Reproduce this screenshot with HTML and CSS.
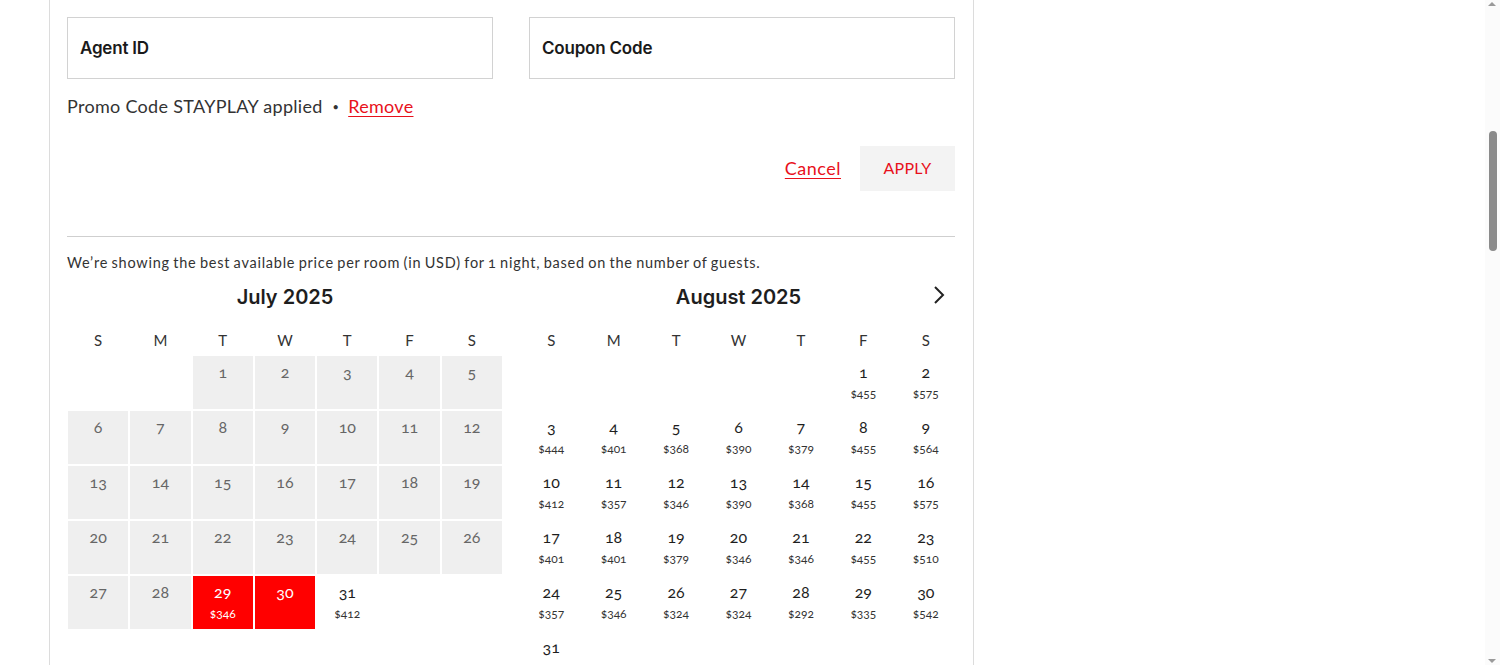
FILE: index.html
```html
<!DOCTYPE html>
<html lang="en">
<head>
<meta charset="utf-8">
<title>Booking</title>
<link rel="stylesheet" href="styles.css">
</head>
<body>
<div class="panel">
  <div class="inputs">
    <div class="field"><span class="label">Agent ID</span></div>
    <div class="field"><span class="label">Coupon Code</span></div>
  </div>
  <p class="promo">Promo Code STAYPLAY applied <span class="dot">•</span> <a class="link" href="#">Remove</a></p>
  <div class="actions">
    <a class="link cancel" href="#">Cancel</a>
    <button class="apply">APPLY</button>
  </div>
  <hr class="divider">
  <p class="note">We’re showing the best available price per room (in USD) for 1 night, based on the number of guests.</p>
  <div class="calendars">
    <div class="month">
      <div class="month-head"><span></span><h2 class="month-title">July 2025</h2><span></span></div>
      <div class="grid">
        <div class="dow">S</div><div class="dow">M</div><div class="dow">T</div><div class="dow">W</div><div class="dow">T</div><div class="dow">F</div><div class="dow">S</div>
        <div class="day empty"></div><div class="day empty"></div>
        <div class="day past"><span class="num">1</span></div>
        <div class="day past"><span class="num">2</span></div>
        <div class="day past"><span class="num">3</span></div>
        <div class="day past"><span class="num">4</span></div>
        <div class="day past"><span class="num">5</span></div>
        <div class="day past"><span class="num">6</span></div>
        <div class="day past"><span class="num">7</span></div>
        <div class="day past"><span class="num">8</span></div>
        <div class="day past"><span class="num">9</span></div>
        <div class="day past"><span class="num">10</span></div>
        <div class="day past"><span class="num">11</span></div>
        <div class="day past"><span class="num">12</span></div>
        <div class="day past"><span class="num">13</span></div>
        <div class="day past"><span class="num">14</span></div>
        <div class="day past"><span class="num">15</span></div>
        <div class="day past"><span class="num">16</span></div>
        <div class="day past"><span class="num">17</span></div>
        <div class="day past"><span class="num">18</span></div>
        <div class="day past"><span class="num">19</span></div>
        <div class="day past"><span class="num">20</span></div>
        <div class="day past"><span class="num">21</span></div>
        <div class="day past"><span class="num">22</span></div>
        <div class="day past"><span class="num">23</span></div>
        <div class="day past"><span class="num">24</span></div>
        <div class="day past"><span class="num">25</span></div>
        <div class="day past"><span class="num">26</span></div>
        <div class="day past"><span class="num">27</span></div>
        <div class="day past"><span class="num">28</span></div>
        <div class="day selected"><span class="num">29</span><span class="price">$346</span></div>
        <div class="day selected"><span class="num">30</span></div>
        <div class="day"><span class="num">31</span><span class="price">$412</span></div>
      </div>
    </div>
    <div class="month">
      <div class="month-head"><span></span><h2 class="month-title">August 2025</h2>
        <button class="next" aria-label="Next month"><svg width="14" height="20" viewBox="0 0 14 20"><polyline points="3,2 11,10 3,18" fill="none" stroke="#222" stroke-width="2"/></svg></button>
      </div>
      <div class="grid">
        <div class="dow">S</div><div class="dow">M</div><div class="dow">T</div><div class="dow">W</div><div class="dow">T</div><div class="dow">F</div><div class="dow">S</div>
        <div class="day empty"></div><div class="day empty"></div><div class="day empty"></div><div class="day empty"></div><div class="day empty"></div>
        <div class="day"><span class="num">1</span><span class="price">$455</span></div>
        <div class="day"><span class="num">2</span><span class="price">$575</span></div>
        <div class="day"><span class="num">3</span><span class="price">$444</span></div>
        <div class="day"><span class="num">4</span><span class="price">$401</span></div>
        <div class="day"><span class="num">5</span><span class="price">$368</span></div>
        <div class="day"><span class="num">6</span><span class="price">$390</span></div>
        <div class="day"><span class="num">7</span><span class="price">$379</span></div>
        <div class="day"><span class="num">8</span><span class="price">$455</span></div>
        <div class="day"><span class="num">9</span><span class="price">$564</span></div>
        <div class="day"><span class="num">10</span><span class="price">$412</span></div>
        <div class="day"><span class="num">11</span><span class="price">$357</span></div>
        <div class="day"><span class="num">12</span><span class="price">$346</span></div>
        <div class="day"><span class="num">13</span><span class="price">$390</span></div>
        <div class="day"><span class="num">14</span><span class="price">$368</span></div>
        <div class="day"><span class="num">15</span><span class="price">$455</span></div>
        <div class="day"><span class="num">16</span><span class="price">$575</span></div>
        <div class="day"><span class="num">17</span><span class="price">$401</span></div>
        <div class="day"><span class="num">18</span><span class="price">$401</span></div>
        <div class="day"><span class="num">19</span><span class="price">$379</span></div>
        <div class="day"><span class="num">20</span><span class="price">$346</span></div>
        <div class="day"><span class="num">21</span><span class="price">$346</span></div>
        <div class="day"><span class="num">22</span><span class="price">$455</span></div>
        <div class="day"><span class="num">23</span><span class="price">$510</span></div>
        <div class="day"><span class="num">24</span><span class="price">$357</span></div>
        <div class="day"><span class="num">25</span><span class="price">$346</span></div>
        <div class="day"><span class="num">26</span><span class="price">$324</span></div>
        <div class="day"><span class="num">27</span><span class="price">$324</span></div>
        <div class="day"><span class="num">28</span><span class="price">$292</span></div>
        <div class="day"><span class="num">29</span><span class="price">$335</span></div>
        <div class="day"><span class="num">30</span><span class="price">$542</span></div>
        <div class="day"><span class="num">31</span><span class="price">$401</span></div>
      </div>
    </div>
  </div>
</div>
<div class="scrollbar">
  <span class="arrow up"></span>
  <span class="thumb"></span>
  <span class="arrow down"></span>
</div>
</body>
</html>
```

FILE: styles.css
```css
html, body {
  margin: 0;
  padding: 0;
  height: 665px;
  overflow: hidden;
  background: #fff;
}
body {
  font-family: Lato, "Open Sans", sans-serif;
  color: #333;
  font-variant-numeric: oldstyle-nums;
}
.panel {
  margin-left: 49px;
  width: 925px;
  box-sizing: border-box;
  border-left: 1px solid #dcdcdc;
  border-right: 1px solid #dcdcdc;
  padding: 17px 18px 0 17px;
  min-height: 700px;
}
.inputs {
  display: grid;
  grid-template-columns: 1fr 1fr;
  column-gap: 36px;
}
.field {
  height: 62px;
  box-sizing: border-box;
  border: 1px solid #d2d2d2;
  display: flex;
  align-items: center;
  padding-left: 12px;
}
.label {
  font-family: Inter, "Liberation Sans", sans-serif;
  font-weight: 600;
  font-size: 17px;
  color: #1a1a1a;
  letter-spacing: -0.2px;
}
.promo {
  margin: 16px 0 0;
  font-size: 18px;
  line-height: 22px;
  color: #333;
  letter-spacing: 0.3px;
}
.dot {
  font-size: 11px;
  margin: 0 4px 0 5px;
  vertical-align: 2px;
}
.link {
  color: #e8101b;
  text-decoration: underline;
  text-underline-offset: 3px;
}
.actions {
  margin-top: 28px;
  display: flex;
  justify-content: flex-end;
  align-items: center;
  gap: 19px;
}
.cancel {
  font-size: 18px;
  letter-spacing: 0.5px;
  margin-top: -2px;
}
.apply {
  width: 95px;
  height: 45px;
  border: none;
  background: #f3f3f3;
  color: #e8101b;
  font-family: Lato, "Open Sans", sans-serif;
  font-size: 16px;
  letter-spacing: 0.3px;
  padding: 0 0 2px;
}
.divider {
  margin: 45px 0 0;
  border: none;
  border-top: 1px solid #cfcfcf;
}
.note {
  margin: 16px 0 0;
  font-size: 14.5px;
  line-height: 20px;
  color: #333;
  letter-spacing: 0.75px;
  word-spacing: -1px;
}
.calendars {
  margin-top: 11px;
  display: grid;
  grid-template-columns: 434px 435px;
  column-gap: 19px;
  padding-left: 1px;
}
.month-head {
  display: grid;
  grid-template-columns: 1fr auto 1fr;
  align-items: center;
  height: 26px;
}
.month-title {
  margin: 0;
  font-family: Inter, "Liberation Sans", sans-serif;
  font-weight: 600;
  font-size: 20px;
  line-height: 26px;
  color: #1e1e1e;
  font-variant-numeric: normal;
}
.next {
  justify-self: end;
  margin-right: 10px;
  margin-top: -4px;
  border: none;
  background: none;
  padding: 0;
  display: flex;
}
.grid {
  margin-top: 20px;
  display: grid;
  grid-template-columns: repeat(7, 1fr);
  column-gap: 2px;
  row-gap: 2px;
}
.dow {
  text-align: center;
  font-size: 15px;
  line-height: 20px;
  color: #333;
  margin-bottom: 4px;
}
.day {
  height: 53px;
  box-sizing: border-box;
  padding-top: 6px;
  display: flex;
  flex-direction: column;
  align-items: center;
  color: #1e1e1e;
}
.num {
  font-size: 16px;
  line-height: 20px;
}
.price {
  margin-top: 4px;
  font-size: 12px;
  line-height: 16px;
  color: #333;
}
.past {
  background: #efefef;
  color: #666;
}
.selected {
  background: #ff0000;
  color: #fff;
}
.selected .price {
  color: #fff;
}
.scrollbar {
  position: fixed;
  top: 0;
  right: 0;
  width: 15px;
  height: 665px;
  background: #fbfbfb;
}
.thumb {
  position: absolute;
  left: 4px;
  top: 131px;
  width: 8px;
  height: 120px;
  border-radius: 4px;
  background: #8b8b8b;
}
.arrow {
  position: absolute;
  left: 3px;
  width: 0;
  height: 0;
  border-left: 4px solid transparent;
  border-right: 4px solid transparent;
}
.arrow.up {
  top: 2px;
  border-bottom: 4px solid #9a9a9a;
}
.arrow.down {
  bottom: 2px;
  border-top: 4px solid #9a9a9a;
}
```
